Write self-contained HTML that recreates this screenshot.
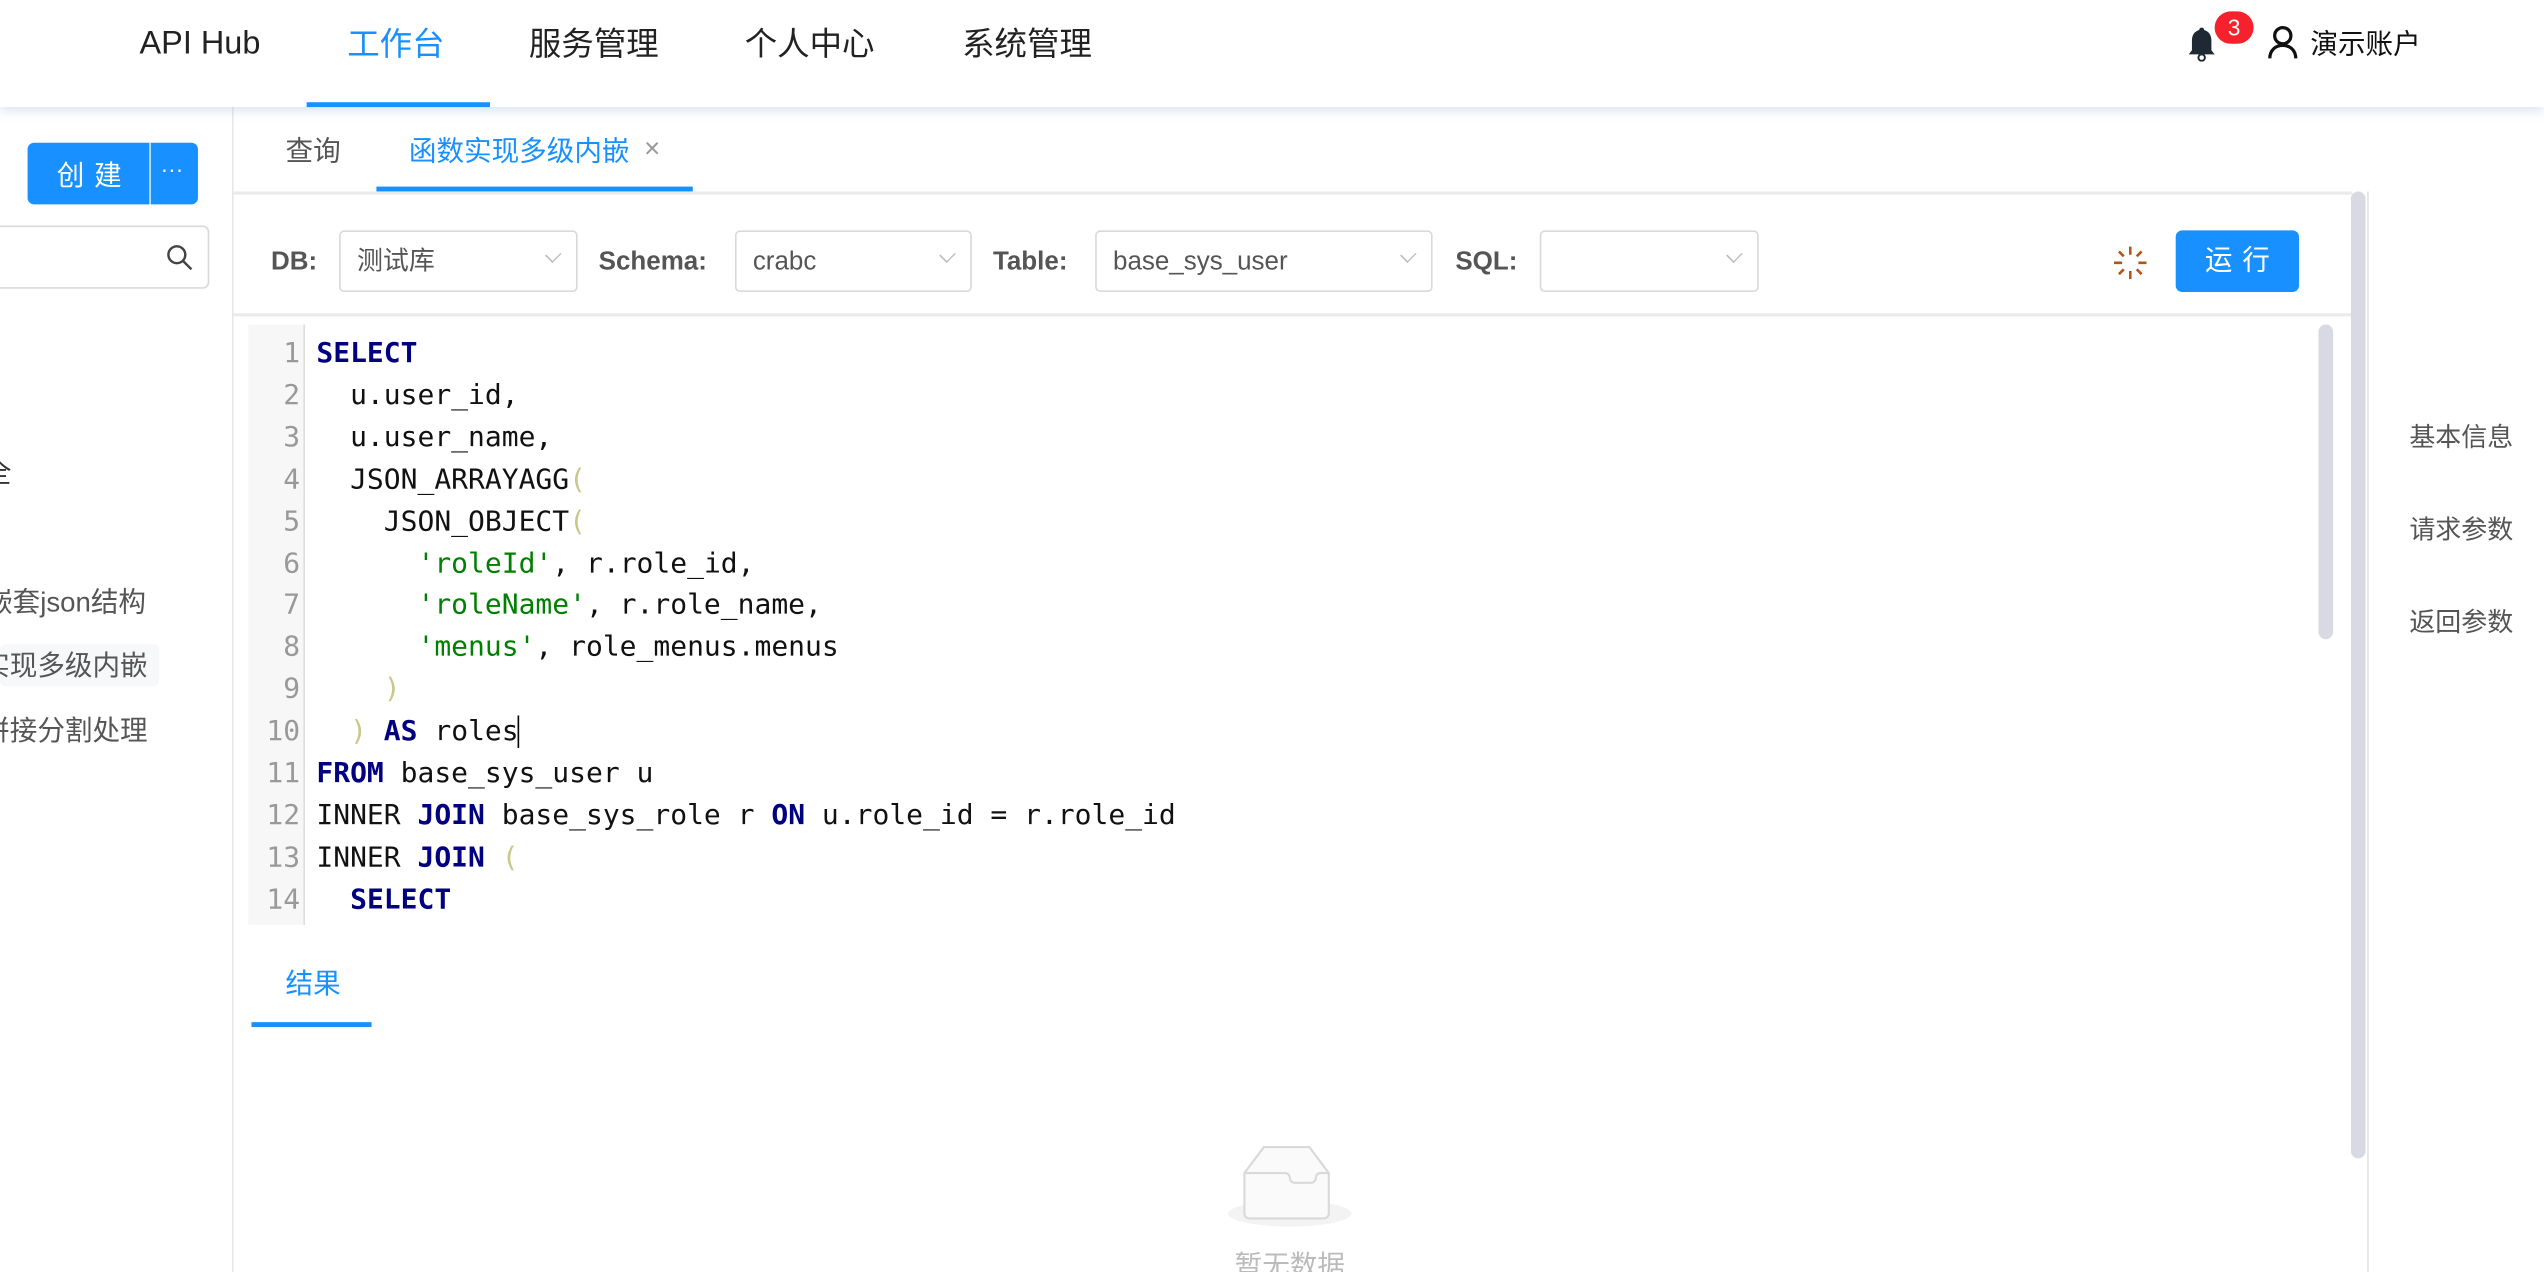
<!DOCTYPE html>
<html><head><meta charset="utf-8"><style>
*{margin:0;padding:0;box-sizing:border-box}
html,body{width:2544px;height:1272px;overflow:hidden;background:#fff}
#w{width:1568px;height:784px;transform:scale(1.62245);transform-origin:0 0;position:relative;font-family:"Liberation Sans","Noto Sans CJK SC",sans-serif;color:#333}
.a{position:absolute;white-space:nowrap}
.code{font-family:"DejaVu Sans Mono","Liberation Mono",monospace;font-size:17.25px;letter-spacing:0}
.k{color:#000080;font-weight:bold}.s{color:#008000}.p{color:#c8c88a}
.ln{color:#999;text-align:right;width:32px}
.sel{position:absolute;height:38px;border:1px solid #d9d9d9;border-radius:3px;top:142px}
.sel span{position:absolute;left:10px;top:0;line-height:37px;font-size:16px;color:#555}
.sel i{position:absolute;right:10px;top:10px;width:8px;height:8px;border-right:1px solid #bbb;border-bottom:1px solid #bbb;transform:rotate(45deg) scaleX(.8)}
.lb{font-size:16px;color:#555;font-weight:bold;top:153px}
</style></head><body><div id="w">
<div class="a" style="left:0;top:0;width:1568px;height:66px;background:#fff;box-shadow:0 2px 6px rgba(150,170,220,.35);z-index:2"></div>
<div class="a" style="z-index:3;left:86px;top:16px;font-size:20px;color:#222">API Hub</div>
<div class="a" style="z-index:3;left:214px;top:11px;font-size:20px;color:#1890ff">工作台</div>
<div class="a" style="z-index:3;left:189px;top:63px;width:113px;height:3px;background:#1890ff"></div>
<div class="a" style="z-index:3;left:326px;top:11px;font-size:20px;color:#222">服务管理</div>
<div class="a" style="z-index:3;left:459px;top:11px;font-size:20px;color:#222">个人中心</div>
<div class="a" style="z-index:3;left:593px;top:11px;font-size:20px;color:#222">系统管理</div>
<svg class="a" style="z-index:3;left:1347px;top:16px" width="20" height="22" viewBox="0 0 20 22"><path d="M10 1c1 0 1.5.6 1.5 1.5 3 .8 4.5 3.2 4.5 6.5v6l2 2.5H2L4 15V9c0-3.3 1.5-5.7 4.5-6.5C8.5 1.6 9 1 10 1z" fill="#1f2933"/><circle cx="10" cy="19.5" r="2" fill="none" stroke="#1f2933" stroke-width="1.2"/></svg>
<div class="a" style="z-index:3;left:1365px;top:7px;width:24px;height:20px;border-radius:10px;background:#f5222d;color:#fff;font-size:14px;text-align:center;line-height:20px">3</div>
<svg class="a" style="z-index:3;left:1397px;top:15px" width="20" height="22" viewBox="0 0 20 22"><circle cx="10" cy="7" r="5" fill="none" stroke="#111" stroke-width="2"/><path d="M2 21c0-5 3.5-8 8-8s8 3 8 8" fill="none" stroke="#111" stroke-width="2"/></svg>
<div class="a" style="z-index:3;left:1424px;top:13px;font-size:17px;color:#111">演示账户</div>
<div class="a" style="left:143px;top:66px;width:1px;height:718px;background:#e8e8e8"></div>
<div class="a" style="left:17px;top:88px;width:105px;height:38px;background:#1890ff;border-radius:4px"></div>
<div class="a" style="left:92px;top:88px;width:1px;height:38px;background:#cfe6ff"></div>
<div class="a" style="left:35px;top:94px;font-size:17px;color:#fff;letter-spacing:6px">创建</div>
<div class="a" style="left:99px;top:96px;font-size:14px;color:#fff">···</div>
<div class="a" style="left:-10px;top:139px;width:139px;height:39px;border:1px solid #d9d9d9;border-radius:4px"></div>
<svg class="a" style="left:102px;top:150px" width="18" height="18" viewBox="0 0 18 18"><circle cx="7" cy="7" r="5.2" fill="none" stroke="#444" stroke-width="1.5"/><path d="M11 11l5 5" stroke="#444" stroke-width="1.5"/></svg>
<div class="a" style="right:1561px;top:277px;font-size:17px;color:#333">全</div>
<div class="a" style="left:0;top:397px;width:98px;height:26px;background:#f7f8fa;border-radius:3px"></div>
<div class="a" style="right:1478px;top:357px;font-size:17px;color:#555">多层嵌套json结构</div>
<div class="a" style="right:1477px;top:396px;font-size:17px;color:#555">函数实现多级内嵌</div>
<div class="a" style="right:1477px;top:436px;font-size:17px;color:#555">字符拼接分割处理</div>
<div class="a" style="left:176px;top:79px;font-size:17px;color:#555">查询</div>
<div class="a" style="left:252px;top:79px;font-size:17px;color:#1890ff">函数实现多级内嵌</div>
<div class="a" style="left:397px;top:82px;font-size:17px;color:#999">×</div>
<div class="a" style="left:232px;top:115px;width:195px;height:3px;background:#1890ff"></div>
<div class="a" style="left:144px;top:118px;width:1306px;height:2px;background:#ebebeb"></div>
<div class="a lb" style="left:167px">DB:</div>
<div class="sel" style="left:209px;width:147px"><span>测试库</span><i></i></div>
<div class="a lb" style="left:369px">Schema:</div>
<div class="sel" style="left:453px;width:146px"><span>crabc</span><i></i></div>
<div class="a lb" style="left:612px">Table:</div>
<div class="sel" style="left:675px;width:208px"><span>base_sys_user</span><i></i></div>
<div class="a lb" style="left:897px">SQL:</div>
<div class="sel" style="left:949px;width:135px"><i></i></div>
<svg class="a" style="left:1301px;top:150px" width="24" height="24" viewBox="0 0 24 24" stroke="#b35418" stroke-width="1.6"><path d="M12 2v5M12 17v5M2 12h5M17 12h5M5 5l3 3M16 16l3 3M5 19l3-3M16 8l3-3"/></svg>
<div class="a" style="left:1341px;top:142px;width:76px;height:38px;background:#1890ff;border-radius:4px;color:#fff;font-size:17px;text-align:center;line-height:38px;letter-spacing:6px;padding-left:6px">运行</div>
<div class="a" style="left:144px;top:193px;width:1306px;height:2px;background:#ebebeb"></div>
<div class="a" style="left:153px;top:200px;width:35px;height:370px;background:#f7f7f7;border-right:1px solid #ddd"></div>
<div class="a code" style="left:153px;top:206px;line-height:25.9px">
<div style="display:flex"><div class="ln">1<br>2<br>3<br>4<br>5<br>6<br>7<br>8<br>9<br>10<br>11<br>12<br>13<br>14</div>
<pre class="code" style="margin-left:10px;line-height:25.9px;color:#111"><span class="k">SELECT</span>
  u.user_id,
  u.user_name,
  JSON_ARRAYAGG<span class="p">(</span>
    JSON_OBJECT<span class="p">(</span>
      <span class="s">'roleId'</span>, r.role_id,
      <span class="s">'roleName'</span>, r.role_name,
      <span class="s">'menus'</span>, role_menus.menus
    <span class="p">)</span>
  <span class="p">)</span> <span class="k">AS</span> roles<span style="border-left:1px solid #000;margin-left:-1px"></span>
<span class="k">FROM</span> base_sys_user u
INNER <span class="k">JOIN</span> base_sys_role r <span class="k">ON</span> u.role_id = r.role_id
INNER <span class="k">JOIN</span> <span class="p">(</span>
  <span class="k">SELECT</span></pre></div></div>
<div class="a" style="left:1429px;top:200px;width:9px;height:194px;background:#d9d9e3;border-radius:5px"></div>
<div class="a" style="left:1449px;top:118px;width:9px;height:596px;background:#d9d9e3;border-radius:5px"></div>
<div class="a" style="left:1459px;top:118px;width:1px;height:666px;background:#e3e3e3"></div>
<div class="a" style="left:176px;top:592px;font-size:17px;color:#1890ff">结果</div>
<div class="a" style="left:155px;top:630px;width:74px;height:3px;background:#1890ff"></div>
<svg class="a" style="left:756px;top:706px" width="80" height="52" viewBox="0 0 80 52"><ellipse cx="39" cy="42" rx="38" ry="8" fill="#f3f3f3"/><path d="M11 17l12-16h28l12 16v25a3 3 0 0 1-3 3H14a3 3 0 0 1-3-3z" fill="#fafafa" stroke="#d9d9d9" stroke-width="1.3"/><path d="M11 17h25a3 3 0 0 1 3 3 3 3 0 0 0 3 3h10a3 3 0 0 0 3-3 3 3 0 0 1 3-3h5" fill="none" stroke="#d9d9d9" stroke-width="1.3"/></svg>
<div class="a" style="left:761px;top:766px;font-size:17px;color:#bbb">暂无数据</div>
<div class="a" style="left:1485px;top:256px;font-size:16px;color:#555">基本信息</div>
<div class="a" style="left:1485px;top:313px;font-size:16px;color:#555">请求参数</div>
<div class="a" style="left:1485px;top:370px;font-size:16px;color:#555">返回参数</div>
</div></body></html>
